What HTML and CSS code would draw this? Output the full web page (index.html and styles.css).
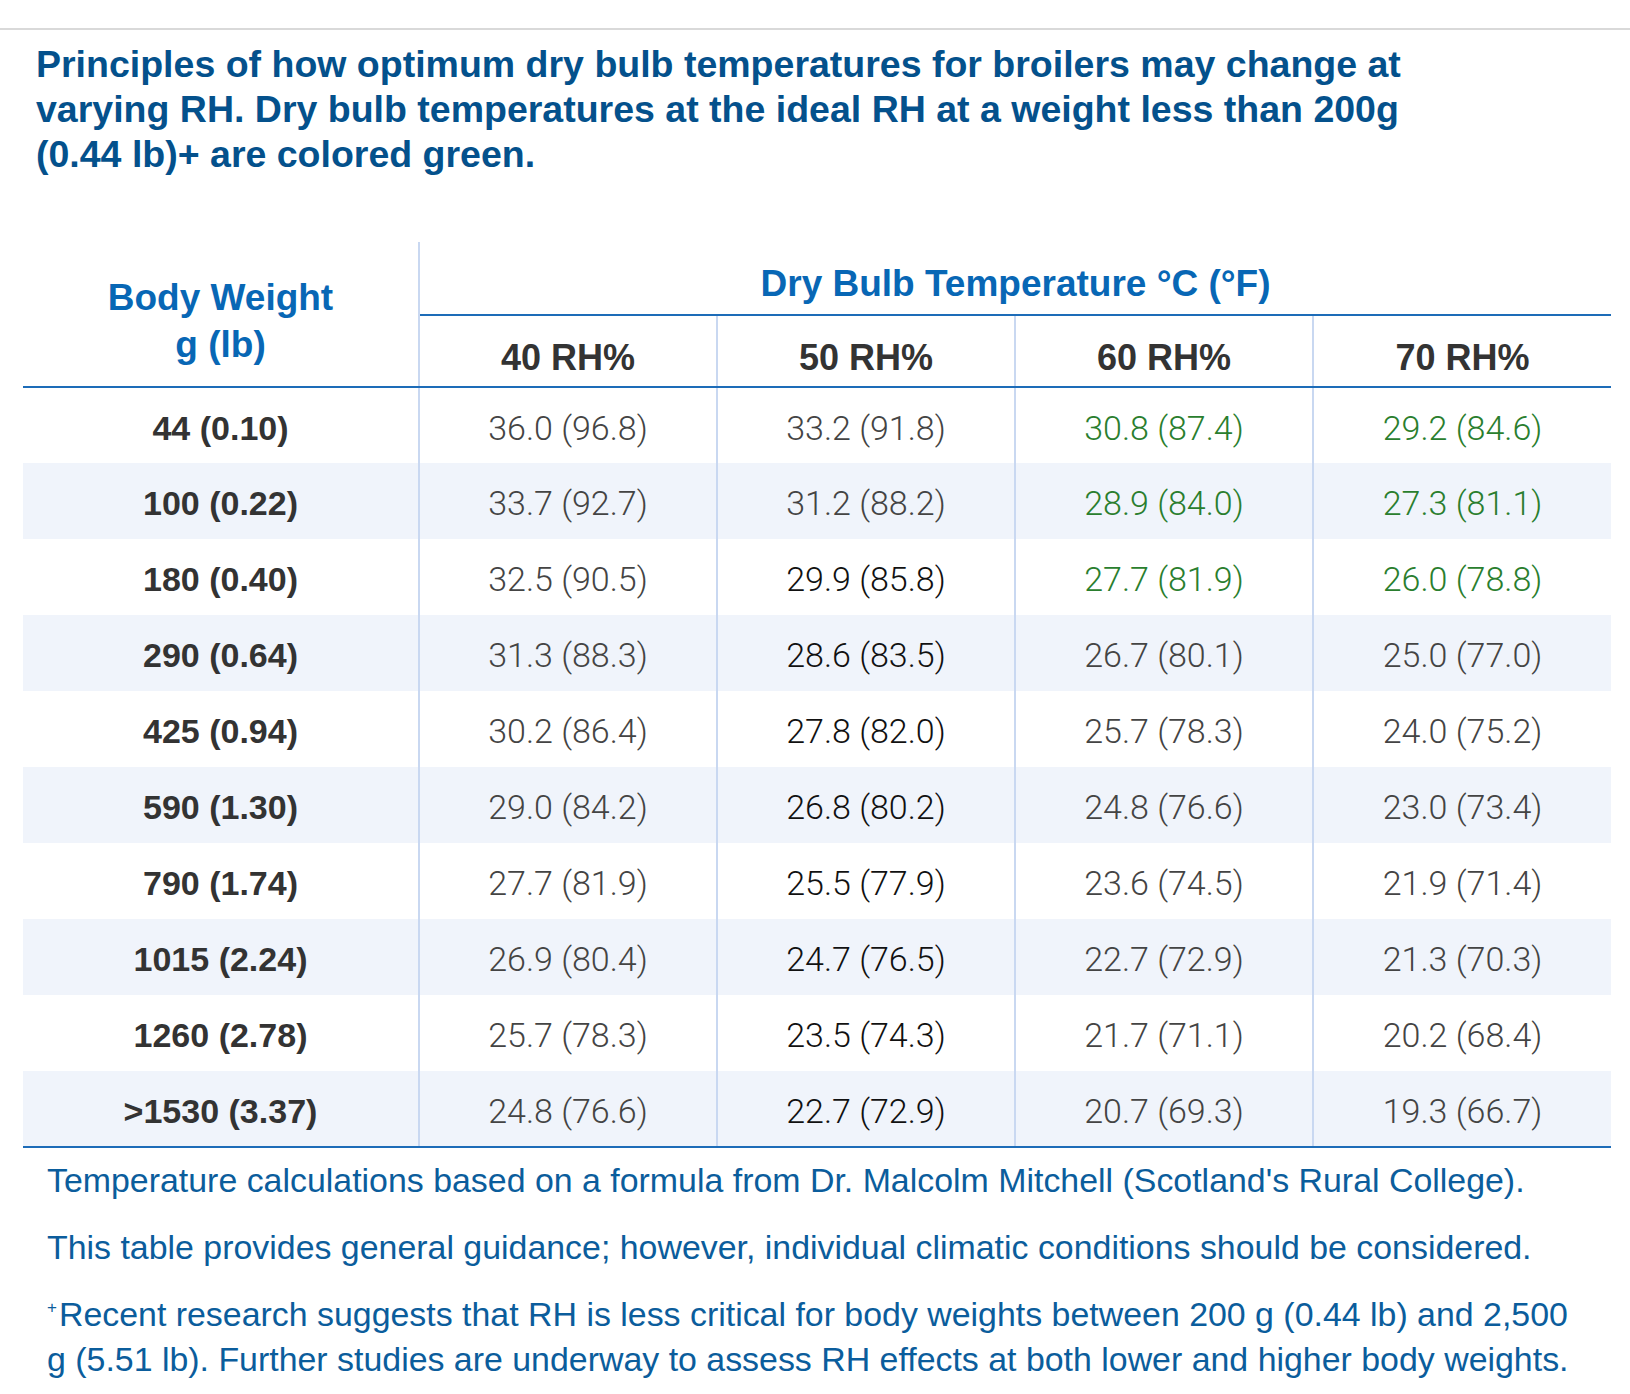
FILE: index.html
```html
<!DOCTYPE html>
<html lang="en">
<head>
<meta charset="utf-8">
<title>Dry bulb temperatures for broilers</title>
<link rel="stylesheet" href="styles.css">
</head>
<body>
<div class="page">
  <div class="topline"></div>
  <h1 class="title">Principles of how optimum dry bulb temperatures for broilers may change at<br>varying RH. Dry bulb temperatures at the ideal RH at a weight less than 200g<br>(0.44 lb)+ are colored green.</h1>

  <table class="grid">
    <colgroup>
      <col class="c-bw">
      <col class="c-rh"><col class="c-rh"><col class="c-rh"><col class="c-rh">
    </colgroup>
    <thead>
      <tr>
        <th class="bw" rowspan="2">Body Weight<br>g (lb)</th>
        <th class="dbt" colspan="4">Dry Bulb Temperature °C (°F)</th>
      </tr>
      <tr class="sub">
        <th>40 RH%</th><th>50 RH%</th><th>60 RH%</th><th>70 RH%</th>
      </tr>
    </thead>
    <tbody>
      <tr><th>44 (0.10)</th><td>36.0 (96.8)</td><td>33.2 (91.8)</td><td class="ok">30.8 (87.4)</td><td class="ok">29.2 (84.6)</td></tr>
      <tr><th>100 (0.22)</th><td>33.7 (92.7)</td><td>31.2 (88.2)</td><td class="ok">28.9 (84.0)</td><td class="ok">27.3 (81.1)</td></tr>
      <tr><th>180 (0.40)</th><td>32.5 (90.5)</td><td class="dark">29.9 (85.8)</td><td class="ok">27.7 (81.9)</td><td class="ok">26.0 (78.8)</td></tr>
      <tr><th>290 (0.64)</th><td>31.3 (88.3)</td><td class="dark">28.6 (83.5)</td><td>26.7 (80.1)</td><td>25.0 (77.0)</td></tr>
      <tr><th>425 (0.94)</th><td>30.2 (86.4)</td><td class="dark">27.8 (82.0)</td><td>25.7 (78.3)</td><td>24.0 (75.2)</td></tr>
      <tr><th>590 (1.30)</th><td>29.0 (84.2)</td><td class="dark">26.8 (80.2)</td><td>24.8 (76.6)</td><td>23.0 (73.4)</td></tr>
      <tr><th>790 (1.74)</th><td>27.7 (81.9)</td><td class="dark">25.5 (77.9)</td><td>23.6 (74.5)</td><td>21.9 (71.4)</td></tr>
      <tr><th>1015 (2.24)</th><td>26.9 (80.4)</td><td class="dark">24.7 (76.5)</td><td>22.7 (72.9)</td><td>21.3 (70.3)</td></tr>
      <tr><th>1260 (2.78)</th><td>25.7 (78.3)</td><td class="dark">23.5 (74.3)</td><td>21.7 (71.1)</td><td>20.2 (68.4)</td></tr>
      <tr><th>&gt;1530 (3.37)</th><td>24.8 (76.6)</td><td class="dark">22.7 (72.9)</td><td>20.7 (69.3)</td><td>19.3 (66.7)</td></tr>
    </tbody>
  </table>

  <div class="notes">
    <p>Temperature calculations based on a formula from Dr. Malcolm Mitchell (Scotland's Rural College).</p>
    <p>This table provides general guidance; however, individual climatic conditions should be considered.</p>
    <p><span class="mark">+</span>Recent research suggests that RH is less critical for body weights between 200 g (0.44 lb) and 2,500 g (5.51 lb). Further studies are underway to assess RH effects at both lower and higher body weights.</p>
  </div>
</div>
</body>
</html>
```

FILE: styles.css
```css
html, body {
  margin: 0;
  padding: 0;
  background: #ffffff;
}

.page {
  width: 1630px;
  padding-top: 28px;
  font-family: "Liberation Sans", Arial, Helvetica, sans-serif;
}

.topline {
  height: 2px;
  background: #d9d9d9;
}

.title {
  margin: 12px 0 0 36px;
  font-size: 37.5px;
  line-height: 45px;
  font-weight: 700;
  color: #04518c;
}

.grid {
  margin: 65px 0 0 23px;
  width: 1588px;
  border-collapse: collapse;
  table-layout: fixed;
}

.c-bw { width: 396px; }
.c-rh { width: 298px; }

.grid th,
.grid td {
  padding: 0;
  text-align: center;
}

.grid thead th {
  font-weight: 700;
}

.grid .bw {
  vertical-align: top;
  padding-top: 32px;
  font-size: 37px;
  line-height: 47px;
  color: #0867b5;
  border-bottom: 2px solid #1d6cb8;
  border-right: 2px solid #c9d8f1;
}

.grid .dbt {
  height: 73px;
  box-sizing: border-box;
  padding-top: 20px;
  font-size: 37px;
  line-height: 44px;
  vertical-align: top;
  color: #0867b5;
  border-bottom: 2px solid #1d6cb8;
}

.grid .sub th {
  height: 72px;
  box-sizing: border-box;
  padding-top: 20px;
  font-size: 36px;
  line-height: 44px;
  vertical-align: top;
  color: #333333;
  border-bottom: 2px solid #1d6cb8;
  border-left: 2px solid #c9d8f1;
}

.grid tbody th,
.grid tbody td {
  box-sizing: border-box;
  height: 76px;
  padding-top: 4px;
  line-height: 40px;
}

.grid tbody tr:nth-child(even) {
  background: #f0f4fb;
}

.grid tbody tr:last-child th,
.grid tbody tr:last-child td {
  border-bottom: 2px solid #1d6cb8;
}

.grid tbody th {
  font-size: 34px;
  font-weight: 700;
  color: #333333;
  border-right: 2px solid #c9d8f1;
}

.grid tbody td {
  font-family: Roboto, "Liberation Sans", sans-serif;
  font-weight: 300;
  font-size: 34px;
  color: #444444;
  border-left: 2px solid #c9d8f1;
}

.grid tbody td.dark {
  color: #111111;
}

.grid tbody td.ok {
  color: #2a7e2e;
}

.notes {
  padding: 10px 60px 0 47px;
  color: #0b5d9c;
  font-size: 33.9px;
  line-height: 45px;
}

.notes p {
  margin: 0 0 22px 0;
}

.notes .mark {
  font-size: 17px;
  line-height: 0;
  vertical-align: 13px;
  margin-right: 2px;
}
```
